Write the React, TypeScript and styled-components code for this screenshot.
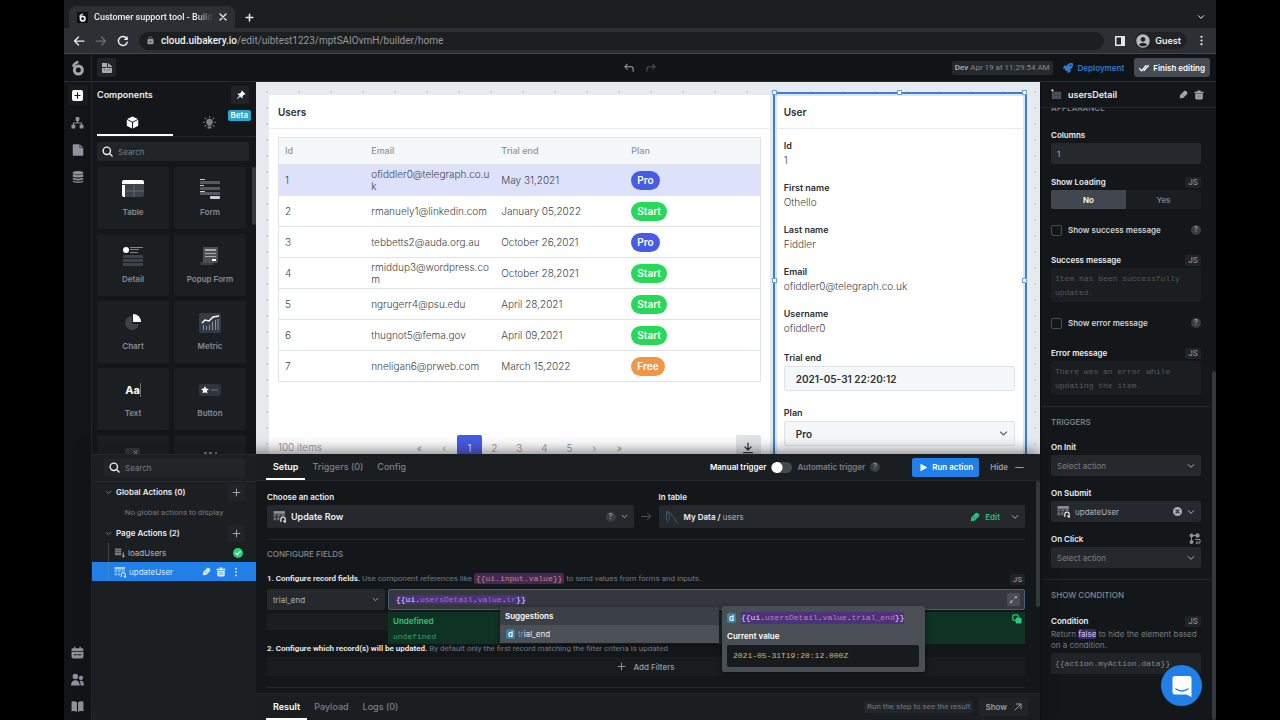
import React from 'react';
import styled, { createGlobalStyle, css } from 'styled-components';
import { MdLock, MdPushPin, MdAccountCircle } from 'react-icons/md';
import { FaRocket } from 'react-icons/fa';

const color = {
  chrome: '#1b1f20',
  chromeBar: '#2c3034',
  rail: '#111517',
  panel: '#13171a',
  raised: '#1b1f22',
  field: '#25292d',
  line: '#24282b',
  text: '#eceef0',
  soft: '#aeb3b8',
  dim: '#74797f',
  faint: '#54595e',
  blue: '#2180e8',
};

const mono = "'Liberation Mono', monospace";
const compact = "Roboto, 'Liberation Sans', sans-serif";

const GlobalStyle = createGlobalStyle`
  * { box-sizing: border-box; }
  body { margin: 0; background: #000; font-family: Inter, 'Liberation Sans', sans-serif; font-size: 9px; line-height: 12px; color: ${color.text}; }
  button, input, select, textarea { font: inherit; color: inherit; margin: 0; padding: 0; border: 0; background: none; outline: 0; }
  a { color: inherit; text-decoration: none; }
  svg { display: block; flex: none; }
`;

/* ---------- icons ---------- */

const Svg = ({ size = 12, children }: { size?: number; children: React.ReactNode }) => (
  <svg width={size} height={size} viewBox="0 0 24 24" fill="none" stroke="currentColor" strokeWidth="2" strokeLinecap="round" strokeLinejoin="round" aria-hidden="true">{children}</svg>
);
const ChevronDown = ({ size = 9 }) => <Svg size={size}><path d="M4 8l8 8 8-8" strokeWidth="3" /></Svg>;
const Plus = ({ size = 10, weight = 2.5 }) => <Svg size={size}><path d="M12 3v18M3 12h18" strokeWidth={weight} /></Svg>;
const SearchIcon = () => <Svg size={11}><circle cx="10.500" cy="10.500" r="8" strokeWidth="3" /><path d="M17 17l5 5" strokeWidth="3" /></Svg>;
const LogoIcon = ({ size = 16 }) => (
  <Svg size={size}><circle cx="12.500" cy="15" r="6" strokeWidth="4.500" /><path d="M4.500 10c1-3.500 3.500-5.500 8-7.500" strokeWidth="3.500" strokeLinecap="butt" /></Svg>
);
const Pencil = ({ size = 10 }) => (
  <Svg size={size}><path d="M2 22l1-9L13 3c2-2 5-1.500 6.500 0l1.500 1.500c1.500 1.500 2 4.500 0 6.500L11 21 2 22z" fill="currentColor" stroke="none" /><path d="M8 16l3-3" stroke="#0005" strokeWidth="2" /></Svg>
);
const Trash = ({ size = 11 }) => (
  <Svg size={size}><path d="M8 1h8v3h7v4H1V4h7V1zM3 9h18v10a4 4 0 01-4 4H7a4 4 0 01-4-4V9z" fill="currentColor" stroke="none" /><path d="M9.500 13v5M14.500 13v5" stroke="#0006" strokeWidth="2" /></Svg>
);
const Dots = ({ size = 12 }) => (
  <Svg size={size}><g fill="currentColor" stroke="none"><circle cx="12" cy="4" r="2.300" /><circle cx="12" cy="12" r="2.300" /><circle cx="12" cy="20" r="2.300" /></g></Svg>
);
const TableAction = ({ size = 12 }) => (
  <Svg size={size}>
    <g stroke="none" fill="currentColor"><path d="M1 2h21v5H1z" opacity=".75" /><path d="M1 8h5v4H1zM7.500 8h6v4h-6zM15 8h7v3h-7zM1 13.500h5V19H1zM7.500 13.500H12V19H7.500z" opacity=".5" /></g>
    <path d="M14.500 21v-4a4 4 0 018 0v5M19.500 20l3 3" stroke="#fff" strokeWidth="2" />
  </Svg>
);
const LoadAction = () => (
  <Svg size={11}><path d="M2 3h14v4H2zM2 8h14v4H2zM2 13h14v5H2z" fill="currentColor" stroke="none" opacity=".6" /><path d="M20.500 13v8M18.500 19.500l2 3 2-3" strokeWidth="2" /></Svg>
);
const Undo = () => <Svg size={10}><path d="M8 3L2 9l6 6M2 9h15a5 5 0 015 5v6" strokeWidth="2.500" /></Svg>;
const Redo = () => <Svg size={10}><path d="M16 3l6 6-6 6M22 9H7a5 5 0 00-5 5v6" strokeWidth="2.500" /></Svg>;
const Tree = () => (
  <Svg size={13}><g fill="currentColor" stroke="none"><rect x="8.500" y="2" width="7" height="7" rx="1" /><rect x="1" y="16" width="7" height="7" rx="1" /><rect x="16" y="16" width="7" height="7" rx="1" /></g><path d="M12 8v5M4.500 17v-4h15v4" /></Svg>
);
const PageIcon = () => <Svg size={14}><path d="M5 2h10l6 6v12a2 2 0 01-2 2H5a2 2 0 01-2-2V4a2 2 0 012-2z" fill="currentColor" stroke="none" /><path d="M15 2v6h6" stroke="#111517" strokeWidth="1" /></Svg>;
const DbIcon = () => (
  <Svg size={14}><g fill="currentColor" stroke="none"><ellipse cx="12" cy="4.500" rx="9" ry="3" /><path d="M3 7c3 2.400 15 2.400 18 0v4c-3 2.400-15 2.400-18 0zM3 13c3 2.400 15 2.400 18 0v3c-3 2.400-15 2.400-18 0zM3 18c3 2.400 15 2.400 18 0v1.500c-2 3.300-16 3.300-18 0z" /></g></Svg>
);
const CalendarIcon = () => (
  <Svg size={13}><path d="M1 9V6a2 2 0 012-2h18a2 2 0 012 2v3zM1 10.500h22V20a3 3 0 01-3 3H4a3 3 0 01-3-3z" fill="currentColor" stroke="none" /><path d="M7 2v4M17 2v4" strokeWidth="2.500" /><path d="M6 16h4M13 16h5" stroke="#111517" /></Svg>
);
const People = () => (
  <Svg size={13}><g fill="currentColor" stroke="none"><circle cx="8" cy="6.500" r="5" /><path d="M0 23c0-13 16-13 16 0z" /><circle cx="18.500" cy="9" r="4" /><path d="M17.500 23H24c0-8-4-10-8-8 1.500 2 1.800 5 1.500 8z" /></g></Svg>
);
const Book = () => <Svg size={13}><path d="M1 3c4-1.500 7-1 10 1v18c-3-2-6-2.500-10-1zM23 3c-4-1.500-7-1-10 1v18c3-2 6-2.500 10-1z" fill="currentColor" stroke="none" /></Svg>;
const Cube = () => (
  <Svg size={13}><path d="M12 1l10 4.500-10 5L2 5.500zM1.500 7l9.500 5v11l-9.500-5zM22.500 7L13 12v11l9.500-5z" fill="currentColor" stroke="none" /></Svg>
);
const Bulb = () => (
  <Svg size={13}><path d="M12 5a6 6 0 013.500 11v2h-7v-2A6 6 0 0112 5zM8.500 19.500h7V23h-7z" fill="currentColor" stroke="none" /><path d="M12 1v1.500M4 4l1.500 1.500M20 4l-1.500 1.500M1 11.500h2M23 11.500h-2M3.500 19L5 17.500M20.500 19L19 17.500" /></Svg>
);
const SaveDoc = () => (
  <Svg size={12}><path d="M2 2h12l8 7v11a2 2 0 01-2 2H4a2 2 0 01-2-2z" fill="currentColor" stroke="none" /><path d="M3 11h7M13 3v8h8M7 16h.01M12 16h.01M17 16h.01" stroke="#22272a" strokeWidth="2" /></Svg>
);
const ArrowRight = () => <Svg size={11}><path d="M2 12h19M14 5l7 7-7 7" /></Svg>;
const BackArrow = () => <Svg size={12}><path d="M22 12H3M11 4l-8 8 8 8" strokeWidth="2.500" /></Svg>;
const ForwardArrow = () => <Svg size={12}><path d="M2 12h19M13 4l8 8-8 8" strokeWidth="2.500" /></Svg>;
const Reload = () => <Svg size={12}><path d="M20.500 14.500A9 9 0 1119 6.500" strokeWidth="2.800" /><path d="M21.500 2v8h-8z" fill="currentColor" stroke="none" /></Svg>;
const Close = () => <Svg size={8}><path d="M3 3l18 18M21 3L3 21" strokeWidth="4" /></Svg>;
const SidePanel = () => <Svg size={12}><path d="M2 2h20v20H2z" fill="#e4e6e8" stroke="none" /><path d="M5 5h9v14H5z" fill="#26292c" stroke="none" /></Svg>;
const DoubleCheck = () => <Svg size={10}><path d="M1 13l5 6L17 6M12 18l11-12" strokeWidth="3" /></Svg>;
const Dolphin = () => (
  <Svg size={14}><path d="M4 20C2 14 2 7 3 3c4 0 7 2 9 6 3 3 5 6 6 10l4 3M3 3c4 3 6 8 4 14" stroke="#3f6e8e" strokeWidth="1.300" /></Svg>
);
const Download = () => <Svg size={12}><path d="M12 2v13M6 10l6 6 6-6M3 21h18" strokeWidth="2.500" /></Svg>;
const CopyIcon = () => <Svg size={10}><rect x="2" y="2" width="13" height="13" rx="3" strokeWidth="3" /><rect x="9" y="9" width="14" height="14" rx="3" fill="currentColor" stroke="none" /></Svg>;
const Expand = () => <Svg size={9}><path d="M14 3h7v7zM10 21H3v-7z" fill="currentColor" stroke="none" /><path d="M19 5l-5 5M5 19l5-5" strokeWidth="2.500" /></Svg>;
const PlayIcon = () => <Svg size={9}><path d="M4 2l18 10L4 22z" fill="currentColor" stroke="none" /></Svg>;
const OpenIcon = () => <Svg size={8}><path d="M3 21L21 3M7 3h14v14" strokeWidth="3" /></Svg>;
const CheckDot = () => <Svg size={10}><circle cx="12" cy="12" r="12" fill="#2ccf74" stroke="none" /><path d="M7 12.500l3.500 3.500L17 9" stroke="#fff" strokeWidth="3" /></Svg>;
const ClearIcon = () => <Svg size={9}><circle cx="12" cy="12" r="12" fill="#a9aeb3" stroke="none" /><path d="M8 8l8 8M16 8l-8 8" stroke="#25292d" strokeWidth="3" /></Svg>;
const NodesIcon = () => (
  <Svg size={12}><g fill="currentColor" stroke="none"><circle cx="5" cy="5" r="4" /><circle cx="5" cy="18" r="4" /><rect x="13" y="1" width="8" height="8" rx="2" /></g><path d="M5 5h10M5 5v13M13 13h9v7h-7M17 17l-3 3 2 2" /></Svg>
);
const DetailSmall = () => <Svg size={11}><path d="M5 6h17v16H2V8z" fill="#555a60" stroke="none" /><circle cx="3" cy="3" r="2.500" fill="#d8dade" stroke="none" /><path d="M5 10h14M5 14h14M5 18h14" stroke="#30353a" strokeWidth="1.500" /></Svg>;
const ChatFace = () => (
  <Svg size={24}><path d="M5 2h14a2.500 2.500 0 012.500 2.500V23l-5-2.500H5A2.500 2.500 0 012.500 18V4.500A2.500 2.500 0 015 2z" fill="#fff" stroke="none" /><path d="M6 15c3.500 2.600 8.500 2.600 12 0" stroke={color.blue} strokeWidth="1.500" /></Svg>
);
const Minus = () => <Svg size={9}><path d="M2 12h20" strokeWidth="3" /></Svg>;

const tileArt: Record<string, React.ReactNode> = {
  Table: (
    <svg width="24" height="20" viewBox="0 0 24 20"><rect x="1" y="1" width="22" height="17" rx="2" fill="#3d434a" /><path d="M1 5V3q0-2 2-2h18q2 0 2 2v2zM1 6h3v12H3q-2 0-2-2z" fill="#fff" /><path d="M13 6v12M5 12h18" stroke="#666c73" /></svg>
  ),
  Form: (
    <svg width="22" height="20" viewBox="0 0 22 20"><g fill="#555a62"><rect x="1" y="2" width="20" height="3" /><rect x="1" y="8" width="20" height="3" /><rect x="1" y="13" width="20" height="3" /></g><g fill="#c9ccd0"><rect x="1" y="0" width="5" height="1" /><rect x="1" y="6" width="4" height="1" /><rect x="1" y="12" width="5" height="1" /><rect x="11" y="17" width="10" height="3" rx="1" /></g></svg>
  ),
  Detail: (
    <svg width="22" height="20" viewBox="0 0 22 20"><circle cx="4" cy="4" r="3" fill="#fff" /><g fill="#80858c"><rect x="8" y="1" width="13" height="1" /><rect x="8" y="3" width="9" height="1" /><rect x="8" y="6" width="8" height="1" /></g><g fill="#3d434b"><rect x="1" y="9" width="20" height="3" /><rect x="1" y="13" width="20" height="3" /><rect x="1" y="17" width="20" height="3" /></g></svg>
  ),
  'Popup Form': (
    <svg width="22" height="20" viewBox="0 0 22 20"><path d="M1 16h14v3H2z" fill="#3a3f45" /><rect x="4" y="1" width="15" height="16" rx="1" fill="#4b5057" /><g fill="#a7abb0"><rect x="6" y="3" width="11" height="2" /><rect x="6" y="7" width="11" height="1" /><rect x="6" y="10" width="11" height="1" /></g><rect x="13" y="13" width="4" height="2" fill="#fff" /></svg>
  ),
  Chart: (
    <svg width="20" height="20" viewBox="0 0 20 20"><path d="M9 3a7 7 0 107 8H9z" fill="#3d4248" /><path d="M10 1a8 8 0 018 8h-8z" fill="#fff" /></svg>
  ),
  Metric: (
    <svg width="22" height="20" viewBox="0 0 22 20"><rect width="22" height="20" rx="2" fill="#343b44" /><path d="M4.500 12v5M7.500 13v4M10.500 12v5M13.500 9v8M16.500 7v10M19 6v11" stroke="#8b939d" /><path d="M3 10l3-3 4 1 4-4 6-1" stroke="#fff" fill="none" strokeWidth="1.500" /></svg>
  ),
  Button: (
    <svg width="22" height="20" viewBox="0 0 22 20"><rect y="4" width="22" height="12" rx="2" fill="#2f353d" /><path d="M6 6l1.200 2.600 2.800.3-2.100 1.900.6 2.800L6 12.200l-2.500 1.400.6-2.800L2 8.900l2.800-.3z" fill="#fff" /><path d="M12 10h7" stroke="#70757b" /></svg>
  ),
  Input: (
    <svg width="22" height="20" viewBox="0 0 22 20"><rect x="3" y="1" width="15" height="12" rx="2" fill="#343a41" /><path d="M12 4l3 3M15 4l-3 3" stroke="#b9bdc1" /></svg>
  ),
  Select: (
    <svg width="22" height="20" viewBox="0 0 22 20"><path d="M5 6h3M10 6h3M16 6h2" stroke="#85898d" strokeWidth="2" /></svg>
  ),
};

/* ---------- browser chrome ---------- */

const Page = styled.div`
  height: 100vh;
  min-height: 600px;
  margin: 0 5%;
  display: flex;
  flex-direction: column;
  background: ${color.panel};
  overflow: hidden;
`;
const TabStrip = styled.div`
  flex: none;
  height: 28px;
  padding: 6px 11px 0 5px;
  display: flex;
  align-items: center;
  gap: 10px;
  background: ${color.chrome};
`;
const BrowserTab = styled.div`
  align-self: stretch;
  width: 166px;
  padding: 0 8px;
  display: flex;
  align-items: center;
  gap: 6px;
  border-radius: 7px 7px 0 0;
  background: ${color.chromeBar};
`;
const Favicon = styled.span`
  padding: 1px;
  background: #0d1013;
`;
const TabTitle = styled.span`
  flex: 1;
  white-space: nowrap;
  overflow: hidden;
  font-family: ${compact};
  font-weight: 500;
  mask-image: linear-gradient(90deg, #000 86%, transparent);
`;
const IconButton = styled.button<{ $tone?: string }>`
  display: flex;
  align-items: center;
  justify-content: center;
  color: ${p => p.$tone ?? color.text};
`;
const Spacer = styled.span`
  flex: 1;
`;
const AddressBar = styled.div`
  flex: none;
  height: 26px;
  padding: 0 9px;
  display: flex;
  align-items: center;
  gap: 10px;
  background: ${color.chromeBar};
  border-bottom: 1px solid #42474a;
`;
const UrlBox = styled.div`
  flex: 1;
  height: 18px;
  padding: 0 7px;
  display: flex;
  align-items: center;
  gap: 6px;
  border-radius: 9px;
  background: ${color.chrome};
  color: #96999c;
  font-family: ${compact};
  font-size: 10px;
`;
const UrlText = styled.span`
  b { color: #f1f2f3; font-weight: 500; }
`;
const GuestChip = styled.button`
  height: 17px;
  padding: 0 6px 0 0;
  display: flex;
  align-items: center;
  gap: 4px;
  border-radius: 9px;
  background: #222225;
  font-weight: 600;
  svg { color: #b7babd; }
`;

/* ---------- app bar ---------- */

const AppBar = styled.header`
  flex: none;
  height: 28px;
  padding-right: 6px;
  display: flex;
  align-items: center;
  border-bottom: 1px solid #2a2e31;
  background: #101417;
`;
const LogoCell = styled.a`
  width: 28px;
  margin-right: 5px;
  align-self: stretch;
  display: flex;
  align-items: center;
  justify-content: center;
  color: #a1a7b1;
  border-right: 1px solid ${color.line};
`;
const SquareButton = styled.button<{ $size?: number }>`
  width: ${p => p.$size ?? 18}px;
  height: ${p => p.$size ?? 18}px;
  display: flex;
  align-items: center;
  justify-content: center;
  border-radius: 2px;
  background: #202428;
  color: #a8adb3;
`;
const PinButton = styled(SquareButton)`
  color: #fff;
  svg { transform: rotate(45deg); }
`;
const BarGroup = styled.div<{ $grow?: boolean; $gap: number }>`
  display: flex;
  align-items: center;
  gap: ${p => p.$gap}px;
  ${p => p.$grow && css`flex: 1; justify-content: center; padding-left: 212px;`}
`;
const VersionPill = styled.span`
  padding: 1px 3px;
  border-radius: 2px;
  background: #25292c;
  color: #85898e;
  font-family: ${compact};
  font-size: 8px;
  b { font-weight: 500; color: #b3b7bb; }
`;
const DeployLink = styled.a`
  height: 18px;
  padding: 0 5px;
  display: flex;
  align-items: center;
  gap: 5px;
  color: #2e7bd0;
  font-size: 8px;
  font-weight: 600;
`;
const FinishButton = styled.button`
  height: 19px;
  padding: 0 5px;
  display: flex;
  align-items: center;
  gap: 4px;
  border-radius: 3px;
  background: #454b52;
  color: #fff;
  font-size: 8px;
  font-weight: 600;
`;

/* ---------- body frame ---------- */

const Body = styled.div`
  flex: 1;
  min-height: 0;
  display: flex;
`;
const Rail = styled.nav`
  width: 28px;
  flex: none;
  padding: 3px 0 4px;
  display: flex;
  flex-direction: column;
  align-items: center;
  gap: 8px;
  background: ${color.rail};
  border-right: 1px solid ${color.line};
`;
const RailButton = styled.button<{ $active?: boolean }>`
  width: 20px;
  height: ${p => (p.$active ? 20 : 19)}px;
  display: flex;
  align-items: center;
  justify-content: center;
  color: ${p => (p.$active ? '#fff' : '#8e939d')};
  background: ${p => (p.$active ? '#181c1f' : 'none')};
`;
const AddSquare = styled.span`
  width: 11px;
  height: 11px;
  display: flex;
  align-items: center;
  justify-content: center;
  border-radius: 2px;
  background: #fff;
  color: #16191c;
`;
const Middle = styled.div`
  flex: 1;
  min-width: 0;
  display: flex;
  flex-direction: column;
`;
const Upper = styled.div`
  flex: 1;
  min-height: 0;
  display: flex;
`;

/* ---------- components panel ---------- */

const Library = styled.aside`
  width: 164px;
  flex: none;
  display: flex;
  flex-direction: column;
  overflow: hidden;
`;
const LibraryHead = styled.div`
  height: 26px;
  flex: none;
  padding: 0 7px 0 5px;
  display: flex;
  align-items: center;
  justify-content: space-between;
  font-weight: 600;
`;
const LibraryTabs = styled.div`
  height: 29px;
  flex: none;
  margin-left: 5px;
  display: flex;
  border-bottom: 1px solid ${color.line};
  position: relative;
`;
const LibraryTab = styled.button<{ $active?: boolean }>`
  width: ${p => (p.$active ? 76 : 73)}px;
  display: flex;
  align-items: center;
  justify-content: center;
  padding: 3px ${p => (p.$active ? 5 : 0)}px 0 0;
  color: ${p => (p.$active ? '#fff' : '#7d8187')};
  border-bottom: 2px solid ${p => (p.$active ? '#fff' : 'transparent')};
`;
const Beta = styled.span`
  position: absolute;
  top: 2px;
  right: 5px;
  padding: 0 3px;
  border-radius: 2px;
  background: #2da5c8;
  color: #e9fbff;
  font-size: 8px;
  line-height: 11px;
  font-weight: 600;
`;
const SearchField = styled.label<{ $inset?: boolean }>`
  height: 19px;
  flex: none;
  margin: ${p => (p.$inset ? '3px 11px 4px 12px' : '5px 7px 6px 5px')};
  padding: 0 5px;
  display: flex;
  align-items: center;
  gap: 5px;
  border-radius: 2px;
  background: #212528;
  input { flex: 1; min-width: 0; font-size: 8px; }
  input::placeholder { color: #777c81; }
`;
const TileArea = styled.div`
  flex: 1;
  min-height: 0;
  overflow: hidden;
  display: flex;
  justify-content: space-between;
  padding-left: 5px;
`;
const TileGrid = styled.div`
  display: grid;
  grid-template-columns: 72px 72px;
  grid-auto-rows: 62px;
  gap: 5px;
`;
const Tile = styled.button`
  display: flex;
  flex-direction: column;
  align-items: center;
  padding-top: 12px;
  gap: 7px;
  border-radius: 2px;
  background: ${color.raised};
  color: #868b90;
  font-size: 8px;
  font-weight: 600;
`;
const TextArt = styled.span`
  margin: 3px 0;
  height: 14px;
  line-height: 14px;
  font-size: 11px;
  font-weight: 700;
  color: #fff;
  border-right: 1px solid #666b70;
`;
const ScrollThumb = styled.span<{ $height: string }>`
  width: 4px;
  height: ${p => p.$height};
  border-radius: 2px;
  background: #33383c;
`;

/* ---------- canvas ---------- */

const Canvas = styled.main`
  flex: 1;
  min-width: 0;
  overflow: hidden;
  padding: 13px 13px 0 13px;
  display: grid;
  grid-template-columns: 65fr 33fr;
  gap: 3px;
  background: radial-gradient(circle, #cdd2d8 1px, transparent 1px) -5px 2px / 32px 16px, #e7ebf0;
  color: #2c3035;
`;
const Card = styled.section`
  background: #fff;
`;
const CardTitle = styled.h2<{ $pad: number }>`
  margin: 0;
  height: 34px;
  padding: 0 ${p => p.$pad}px;
  font-size: 10px;
  line-height: 34px;
  font-weight: 600;
  border-bottom: 1px solid #e8ecf0;
`;
const TableBody = styled.div`
  padding: 8px 9px 0;
`;
const TableSpace = styled.div`
  min-height: 298px;
`;
const DataTable = styled.table`
  width: 100%;
  table-layout: fixed;
  border-collapse: collapse;
  border: 1px solid #e0e4e8;
  font-size: 10px;
  line-height: 12px;
  font-weight: 300;
  th, td { padding: 0 2px 0 6px; text-align: left; word-break: break-all; }
  th { height: 27px; font-size: 9px; font-weight: 500; color: #8d929c; background: #f5f8fb; }
  td { height: 31px; border-top: 1px solid #e0e4e8; color: #41454a; }
`;
const Row = styled.tr<{ $selected?: boolean }>`
  background: ${p => (p.$selected ? '#dde2fa' : '#fff')};
`;
const PlanTag = styled.span<{ $plan: string }>`
  display: inline-block;
  padding: 0 6px;
  border-radius: 10px;
  line-height: 19px;
  font-weight: 600;
  color: #fff;
  background: ${p => ({ Pro: '#475ce6', Start: '#26d959', Free: '#f29546' } as Record<string, string>)[p.$plan]};
`;
const TableFoot = styled.div`
  display: grid;
  grid-template-columns: 1fr auto 1fr;
  color: #8b8fa0;
  font-weight: 300;
  font-size: 10px;
  line-height: 24px;
`;
const PageButton = styled.button<{ $active?: boolean }>`
  width: 25px;
  height: 25px;
  border-radius: 2px;
  ${p => p.$active && css`background: #475ce6; color: #fff;`}
`;
const ExportButton = styled.button`
  justify-self: end;
  width: 25px;
  height: 25px;
  display: flex;
  align-items: center;
  justify-content: center;
  border-radius: 2px;
  background: #e3e5e8;
  color: #2c3035;
`;
const Selected = styled(Card)`
  position: relative;
  margin-top: -3px;
  padding: 1px 10px 0 9px;
  border: 2px solid #3c80cc;
  border-bottom: 0;
  box-shadow: inset 0 0 0 2px #d9e7f8;
`;
const Handle = styled.span<{ $x: string; $y: string }>`
  position: absolute;
  left: ${p => p.$x};
  top: ${p => p.$y};
  width: 5px;
  height: 5px;
  margin: -4px 0 0 -3px;
  background: #fff;
  border: 1px solid #6c9fd8;
`;
const UserTitle = styled(CardTitle)`
  margin: 0 -7px 9px -7px;
`;
const Detail = styled.dl`
  margin: 0 0 16px;
  dt { font-size: 9px; line-height: 15px; font-weight: 600; }
  dd { margin: 0 0 13px; font-size: 10px; line-height: 14px; font-weight: 300; color: #41454a; }
`;
const UserField = styled.label`
  display: block;
  margin-bottom: 15px;
  font-size: 9px;
  line-height: 14px;
  font-weight: 600;
`;
const UserControl = styled.span`
  height: 25px;
  margin-top: 1px;
  padding: 0 6px 0 11px;
  display: flex;
  align-items: center;
  border: 1px solid #dfe4ea;
  border-radius: 2px;
  background: #f5f8fb;
  font-size: 10px;
  font-weight: 600;
  input, select { flex: 1; min-width: 0; appearance: none; }
  svg { color: #5f656c; }
`;

/* ---------- dock ---------- */

const Dock = styled.section`
  position: relative;
  flex: none;
  height: 266px;
  display: flex;
  box-shadow: 0 -2px 14px rgba(20, 20, 20, 0.6);
`;
const ActionList = styled.aside`
  width: 164px;
  flex: none;
  display: flex;
  flex-direction: column;
  background: ${color.raised};
  border-top: 1px solid #26292c;
`;
const ListGroups = styled.div`
  border-top: 1px solid ${color.line};
`;
const GroupHead = styled.div`
  height: 20px;
  padding: 0 11px 0 13px;
  display: flex;
  align-items: center;
  justify-content: space-between;
  font-size: 8px;
  font-weight: 600;
`;
const GroupToggle = styled.button`
  display: flex;
  align-items: center;
  gap: 4px;
  svg { color: #7c8187; }
`;
const EmptyNote = styled.p`
  margin: 0;
  height: 21px;
  line-height: 21px;
  text-align: center;
  color: ${color.dim};
  font-family: ${compact};
  font-size: 8px;
`;
const ActionRow = styled.div<{ $active?: boolean }>`
  height: 19px;
  padding: 0 ${p => (p.$active ? 15 : 13)}px 0 22px;
  display: flex;
  align-items: center;
  gap: 5px;
  font-size: 8px;
  color: ${p => (p.$active ? '#d8e9ff' : '#b7bbc0')};
  background: linear-gradient(#7f888f55, #7f888f55) 16px 0 / 1px 100% no-repeat ${p => (p.$active ? color.blue : 'transparent')};
  > button:first-child { flex: 1; display: flex; align-items: center; gap: 3px; }
`;
const Editor = styled.div`
  flex: 1;
  min-width: 0;
  display: flex;
  flex-direction: column;
  background: ${color.panel};
`;
const EditorBar = styled.div<{ $foot?: boolean }>`
  height: 27px;
  flex: none;
  display: flex;
  align-items: stretch;
  padding: 0 ${p => (p.$foot ? 12 : 16)}px 0 10px;
  background: #1a1e20;
  ${p => (p.$foot ? css`border-top: 1px solid ${color.line};` : css`border-bottom: 1px solid ${color.line};`)}
`;
const EditorTab = styled.button<{ $active?: boolean }>`
  padding: 0 7px;
  font-size: 9px;
  font-weight: ${p => (p.$active ? 600 : 500)};
  color: ${p => (p.$active ? '#fff' : '#7b8086')};
  border-top: 2px solid transparent;
  border-bottom: 2px solid ${p => (p.$active ? '#fff' : 'transparent')};
`;
const TriggerLabel = styled.span<{ $on?: boolean }>`
  font-size: 8px;
  font-weight: 600;
  color: ${p => (p.$on ? '#fff' : '#7b8086')};
`;
const Switch = styled.input`
  appearance: none;
  width: 21px;
  height: 11px;
  border-radius: 6px;
  background: radial-gradient(circle at 6px 50%, #fff 5px, #44494e 6px);
`;
const Help = styled.button`
  width: 10px;
  height: 10px;
  border-radius: 5px;
  background: #3a3e43;
  color: #989da2;
  font-size: 7px;
  line-height: 10px;
  font-weight: 600;
`;
const RunSlot = styled.div`
  margin-left: 32px;
  display: flex;
  align-items: center;
  gap: 11px;
`;
const RunButton = styled.button`
  height: 19px;
  padding: 0 6px 0 7px;
  display: flex;
  align-items: center;
  gap: 4px;
  border-radius: 2px;
  background: ${color.blue};
  color: #fff;
  font-size: 8px;
  font-weight: 600;
`;
const FlatButton = styled.button<{ $boxed?: boolean }>`
  display: flex;
  align-items: center;
  gap: 7px;
  color: #9a9fa4;
  font-size: 8px;
  font-weight: 600;
  ${p => p.$boxed && css`background: #202427; padding: 0 6px; height: 18px;`}
`;
const EditorScroll = styled.div`
  flex: 1;
  min-height: 0;
  display: flex;
  justify-content: space-between;
`;
const Form = styled.div`
  flex: 1;
  min-width: 0;
  padding: 10px 11px 0 11px;
`;
const Choice = styled.div`
  display: grid;
  grid-template-columns: 1fr 25px 1fr;
  align-items: end;
  padding-bottom: 11px;
  border-bottom: 1px solid ${color.line};
`;
const FieldLabel = styled.label`
  display: block;
  font-size: 8px;
  font-weight: 600;
`;
const Control = styled.div<{ $h?: number }>`
  height: ${p => p.$h ?? 21}px;
  padding: 0 6px;
  display: flex;
  align-items: center;
  gap: 5px;
  border-radius: 2px;
  background: ${color.field};
  color: ${color.soft};
  font-size: 8px;
  select, input { flex: 1; min-width: 0; appearance: none; }
  select option { color: #000; }
`;
const ActionSelect = styled.select<{ $empty: boolean }>`
  color: ${p => (p.$empty ? '#7b8085' : color.soft)};
`;
const MainControl = styled(Control)`
  margin-top: 2px;
  select { font-size: 9px; font-weight: 600; color: #eceef0; }
`;
const SourceButton = styled.button`
  flex: 1;
  text-align: left;
  font-size: 8px;
  b { font-weight: 600; color: #eceef0; }
`;
const ArrowCell = styled.span`
  height: 23px;
  display: flex;
  align-items: center;
  justify-content: center;
  color: ${color.faint};
`;
const EditButton = styled.button`
  display: flex;
  align-items: center;
  gap: 5px;
  margin-right: 6px;
  color: #2bbf7b;
  font-weight: 600;
`;
const SectionTitle = styled.h3`
  margin: 0;
  font-size: 8px;
  line-height: 12px;
  font-weight: 500;
  color: #858a90;
`;
const TitleSlot = styled.div`
  padding-top: 8px;
`;
const Step = styled.div`
  height: 12px;
  margin-top: 13px;
  display: flex;
  align-items: center;
  justify-content: space-between;
  color: ${color.dim};
  font-family: ${compact};
  font-size: 8px;
  b { color: #f0f1f2; font-weight: 600; }
`;
const Js = styled.button`
  height: 11px;
  padding: 0 3px;
  border-radius: 2px;
  background: #202427;
  color: #8b9095;
  font-size: 8px;
  line-height: 11px;
  font-weight: 500;
`;
const Code = styled.code`
  padding: 1px 2px;
  border-radius: 2px;
  background: #43285c;
  color: #d08a63;
  font-family: ${mono};
  font-size: 8px;
`;
const Expression = styled.code`
  background: #4b327c;
  color: #9b76bb;
  font-family: ${mono};
  font-size: 8px;
  line-height: 12px;
  i { font-style: normal; color: #e2dcf0; }
  em { font-style: normal; color: #c77dae; }
`;
const FieldRow = styled.div`
  position: relative;
  margin-top: 4px;
  display: grid;
  grid-template-columns: 118px 1fr;
  gap: 3px;
`;
const ExpressionBox = styled.div`
  height: 21px;
  padding: 0 4px 0 7px;
  display: flex;
  align-items: center;
  justify-content: space-between;
  border: 1px solid #43627f;
  border-radius: 2px;
  background: #34383e;
  > div { outline: 0; flex: 1; }
`;
const ExpandButton = styled(SquareButton)`
  background: #4a4e54;
`;
const NextRow = styled.div`
  margin-top: 3px;
  height: 17px;
  background: #1a1e21;
`;
const Preview = styled.div`
  position: absolute;
  z-index: 1;
  top: 23px;
  left: 121px;
  right: 0;
  height: 32px;
  padding: 2px 3px 0 5px;
  display: flex;
  justify-content: space-between;
  background: #0f3323;
  color: #2fc67e;
  font-size: 8px;
  b { display: block; line-height: 14px; font-weight: 600; }
  code { display: block; font-family: ${mono}; line-height: 18px; color: #2fa46d; }
`;
const Suggestions = styled.div`
  position: absolute;
  z-index: 2;
  top: 18px;
  left: 233px;
  width: 219px;
  background: #3b3f46;
  font-size: 8px;
  line-height: 18px;
  box-shadow: 0 1px 4px #0008;
  h4 { margin: 0; padding: 0 5px; font-size: 8px; font-weight: 600; color: #fff; }
`;
const SuggestionItem = styled.button`
  width: 100%;
  height: 18px;
  padding: 0 6px;
  display: flex;
  align-items: center;
  gap: 3px;
  background: #4c5057;
  mark { background: none; color: #5aa2e6; }
`;
const TypeBadge = styled.span`
  width: 9px;
  height: 10px;
  border-radius: 2px;
  background: #3a829f;
  color: #fff;
  text-align: center;
  font-size: 8px;
  line-height: 10px;
  font-weight: 600;
`;
const ValueTip = styled.div`
  position: absolute;
  z-index: 3;
  top: 17px;
  left: 455px;
  width: 203px;
  padding: 6px 6px 5px 5px;
  border-radius: 2px;
  background: #4a4e55;
  box-shadow: 0 1px 5px #0008;
  font-size: 8px;
  h4 { margin: 6px 0 3px; font-size: 8px; line-height: 12px; font-weight: 600; color: #fff; }
`;
const TipHead = styled.div`
  display: flex;
  align-items: center;
  gap: 5px;
`;
const ValueOut = styled.output`
  display: block;
  height: 22px;
  padding-left: 6px;
  border-radius: 2px;
  background: #181b1d;
  color: #d5b968;
  font-family: ${mono};
  font-size: 8px;
  line-height: 22px;
`;
const AddFilters = styled.button`
  width: 100%;
  height: 19px;
  margin-top: 2px;
  display: flex;
  align-items: center;
  justify-content: center;
  gap: 7px;
  background: #181c1f;
  color: #999da2;
  font-size: 8px;
  font-weight: 500;
`;
const Rule = styled.hr`
  margin: 11px 0 0;
  border: 0;
  border-top: 1px solid ${color.line};
`;
const RunNote = styled.span`
  padding: 0 3px;
  border-radius: 2px;
  background: #22262a;
  color: #74797f;
  font-family: ${compact};
  font-size: 8px;
`;

/* ---------- inspector ---------- */

const Inspector = styled.aside`
  width: 176px;
  flex: none;
  display: flex;
  flex-direction: column;
  background: ${color.panel};
  border-left: 1px solid #0c0f11;
`;
const InspectorHead = styled.div`
  height: 26px;
  flex: none;
  padding: 0 12px 0 10px;
  display: flex;
  align-items: center;
  gap: 6px;
  font-weight: 600;
  border-bottom: 1px solid ${color.line};
`;
const InspectorScroll = styled.div`
  flex: 1;
  min-height: 0;
  overflow: hidden;
  display: flex;
  align-items: flex-end;
  justify-content: space-between;
`;
const InspectorBody = styled.div`
  flex: 1;
  min-width: 0;
  align-self: flex-start;
  margin-top: -6px;
`;
const Block = styled.section`
  padding: 0 11px 11px 10px;
  border-bottom: 1px solid ${color.line};
  & + & { padding-top: 9px; }
  &:last-child { border-bottom: 0; }
`;
const Field = styled.div<{ $top?: number }>`
  margin-top: ${p => p.$top ?? 11}px;
`;
const LabelRow = styled.div`
  margin-bottom: 2px;
  height: 12px;
  display: flex;
  align-items: center;
  justify-content: space-between;
  svg { color: #8b9095; }
`;
const Segments = styled.div`
  display: grid;
  grid-template-columns: 1fr 1fr;
  border-radius: 2px;
  overflow: hidden;
  background: #1a1e21;
`;
const Segment = styled.button<{ $on?: boolean }>`
  height: 19px;
  font-size: 8px;
  font-weight: 600;
  color: ${p => (p.$on ? '#fff' : '#7d8287')};
  background: ${p => (p.$on ? '#41474e' : 'none')};
`;
const CheckRow = styled.div`
  margin-top: 15px;
  height: 12px;
  display: flex;
  align-items: center;
  justify-content: space-between;
  label { display: flex; align-items: center; gap: 6px; font-size: 8px; font-weight: 600; color: #cfd2d5; }
  input { appearance: none; width: 11px; height: 11px; border: 1px solid #484d52; border-radius: 2px; }
`;
const Message = styled.textarea`
  display: block;
  width: 100%;
  height: 34px;
  padding: 4px 4px 2px;
  resize: none;
  overflow: hidden;
  border-radius: 2px;
  background: #1a1e21;
  font-family: ${mono};
  font-size: 8px;
  line-height: 14px;
  &::placeholder { color: #55595d; }
`;
const Hint = styled.p`
  margin: 0 0 2px;
  color: #767b81;
  font-size: 8px;
  line-height: 11px;
  mark { background: #3c2a68; color: #d5c8f2; border-radius: 2px; }
`;
const CodeInput = styled.input`
  width: 100%;
  height: 21px;
  padding: 0 4px;
  border-radius: 2px;
  background: #202427;
  font-family: ${mono};
  font-size: 8px;
  &::placeholder { color: #85898d; }
`;
const ChatButton = styled.button`
  position: fixed;
  right: calc(5% + 14px);
  bottom: 14px;
  width: 41px;
  height: 41px;
  display: flex;
  align-items: center;
  justify-content: center;
  border-radius: 50%;
  background: ${color.blue};
`;

const rows = [
  ['1', 'ofiddler0@telegraph.co.uk', 'May 31,2021', 'Pro'],
  ['2', 'rmanuely1@linkedin.com', 'January 05,2022', 'Start'],
  ['3', 'tebbetts2@auda.org.au', 'October 26,2021', 'Pro'],
  ['4', 'rmiddup3@wordpress.com', 'October 28,2021', 'Start'],
  ['5', 'ngrugerr4@psu.edu', 'April 28,2021', 'Start'],
  ['6', 'thugnot5@fema.gov', 'April 09,2021', 'Start'],
  ['7', 'nneligan6@prweb.com', 'March 15,2022', 'Free'],
];
const details = [
  ['Id', '1'],
  ['First name', 'Othello'],
  ['Last name', 'Fiddler'],
  ['Email', 'ofiddler0@telegraph.co.uk'],
  ['Username', 'ofiddler0'],
];
const handles = [['0%', '0%'], ['50%', '0%'], ['100%', '0%'], ['0%', '188px'], ['100%', '188px']];

function SelectAction({ id, value }: { id: string; value?: string }) {
  return (
    <Control>
      {value && <TableAction size={13} />}
      <ActionSelect id={id} $empty={!value}><option>{value ?? 'Select action'}</option></ActionSelect>
      {value && <IconButton aria-label="Clear"><ClearIcon /></IconButton>}
      <ChevronDown size={8} />
    </Control>
  );
}

function MessageField({ id, label, check, text }: { id: string; label: string; check: string; text: string }) {
  return (
    <>
      <CheckRow>
        <label><input type="checkbox" />{check}</label>
        <Help aria-label="Help">?</Help>
      </CheckRow>
      <Field $top={18}>
        <LabelRow><FieldLabel htmlFor={id}>{label}</FieldLabel><Js>JS</Js></LabelRow>
        <Message id={id} placeholder={text} />
      </Field>
    </>
  );
}

export default function App() {
  return (
    <Page>
      <GlobalStyle />
      <TabStrip>
        <BrowserTab>
          <Favicon><LogoIcon size={9} /></Favicon>
          <TabTitle>Customer support tool - Builder</TabTitle>
          <IconButton aria-label="Close tab"><Close /></IconButton>
        </BrowserTab>
        <IconButton aria-label="New tab"><Plus size={9} weight={4} /></IconButton>
        <Spacer />
        <IconButton aria-label="Tabs"><ChevronDown size={8} /></IconButton>
      </TabStrip>
      <AddressBar>
        <IconButton aria-label="Back"><BackArrow /></IconButton>
        <IconButton aria-label="Forward" $tone="#6b6f73"><ForwardArrow /></IconButton>
        <IconButton aria-label="Reload"><Reload /></IconButton>
        <UrlBox>
          <MdLock size={9} />
          <UrlText><b>cloud.uibakery.io</b>/edit/uibtest1223/mptSAIOvmH/builder/home</UrlText>
        </UrlBox>
        <BarGroup $gap={9}>
          <IconButton aria-label="Side panel"><SidePanel /></IconButton>
          <GuestChip><MdAccountCircle size={16} />Guest</GuestChip>
          <IconButton aria-label="Menu"><Dots size={11} /></IconButton>
        </BarGroup>
      </AddressBar>

      <AppBar>
        <LogoCell href="#" aria-label="Home"><LogoIcon /></LogoCell>
        <SquareButton $size={19} aria-label="Save"><SaveDoc /></SquareButton>
        <BarGroup $grow $gap={12}>
          <IconButton aria-label="Undo" $tone="#a1a6ac"><Undo /></IconButton>
          <IconButton aria-label="Redo" $tone="#50555a"><Redo /></IconButton>
        </BarGroup>
        <BarGroup $gap={5}>
          <VersionPill><b>Dev</b> Apr 19 at 11:29:54 AM</VersionPill>
          <DeployLink href="#"><FaRocket size={10} />Deployment</DeployLink>
          <FinishButton><DoubleCheck />Finish editing</FinishButton>
        </BarGroup>
      </AppBar>

      <Body>
        <Rail>
          <RailButton $active aria-label="Add"><AddSquare><Plus size={7} weight={4} /></AddSquare></RailButton>
          <RailButton aria-label="Structure"><Tree /></RailButton>
          <RailButton aria-label="Pages"><PageIcon /></RailButton>
          <RailButton aria-label="Data"><DbIcon /></RailButton>
          <Spacer />
          <RailButton aria-label="Schedule"><CalendarIcon /></RailButton>
          <RailButton aria-label="Team"><People /></RailButton>
          <RailButton aria-label="Docs"><Book /></RailButton>
        </Rail>

        <Middle>
          <Upper>
            <Library>
              <LibraryHead>Components<PinButton aria-label="Pin"><MdPushPin size={11} /></PinButton></LibraryHead>
              <LibraryTabs>
                <LibraryTab $active aria-label="Components"><Cube /></LibraryTab>
                <LibraryTab aria-label="Ideas"><Bulb /></LibraryTab>
                <Beta>Beta</Beta>
              </LibraryTabs>
              <SearchField><SearchIcon /><input placeholder="Search" aria-label="Search components" /></SearchField>
              <TileArea>
                <TileGrid>
                  {['Table', 'Form', 'Detail', 'Popup Form', 'Chart', 'Metric', 'Text', 'Button', 'Input', 'Select'].map(name => (
                    <Tile key={name}>{tileArt[name] ?? <TextArt>Aa</TextArt>}{name}</Tile>
                  ))}
                </TileGrid>
                <ScrollThumb $height="58px" />
              </TileArea>
            </Library>

            <Canvas>
              <Card>
                <CardTitle $pad={9}>Users</CardTitle>
                <TableBody>
                  <TableSpace>
                    <DataTable>
                      <colgroup><col width="18%" /><col width="27%" /><col width="27%" /><col width="28%" /></colgroup>
                      <thead><tr><th>Id</th><th>Email</th><th>Trial end</th><th>Plan</th></tr></thead>
                      <tbody>
                        {rows.map(([id, email, date, plan]) => (
                          <Row key={id} $selected={id === '1'}>
                            <td>{id}</td><td>{email}</td><td>{date}</td><td><PlanTag $plan={plan}>{plan}</PlanTag></td>
                          </Row>
                        ))}
                      </tbody>
                    </DataTable>
                  </TableSpace>
                  <TableFoot>
                    <span>100 items</span>
                    <span>
                      {['«', '‹', '1', '2', '3', '4', '5', '›', '»'].map(p => <PageButton key={p} $active={p === '1'}>{p}</PageButton>)}
                    </span>
                    <ExportButton aria-label="Download"><Download /></ExportButton>
                  </TableFoot>
                </TableBody>
              </Card>
              <Selected>
                {handles.map(([x, y]) => <Handle key={x + y} $x={x} $y={y} />)}
                <UserTitle $pad={7}>User</UserTitle>
                <Detail>
                  {details.map(([k, v]) => <React.Fragment key={k}><dt>{k}</dt><dd>{v}</dd></React.Fragment>)}
                </Detail>
                <UserField>Trial end<UserControl><input defaultValue="2021-05-31 22:20:12" /></UserControl></UserField>
                <UserField>Plan<UserControl><select><option>Pro</option></select><ChevronDown /></UserControl></UserField>
              </Selected>
            </Canvas>
          </Upper>

          <Dock>
            <ActionList>
              <SearchField $inset><SearchIcon /><input placeholder="Search" aria-label="Search actions" /></SearchField>
              <ListGroups>
                <GroupHead><GroupToggle><ChevronDown size={7} />Global Actions (0)</GroupToggle><SquareButton $size={17} aria-label="Add global action"><Plus size={9} /></SquareButton></GroupHead>
                <EmptyNote>No global actions to display</EmptyNote>
                <GroupHead><GroupToggle><ChevronDown size={7} />Page Actions (2)</GroupToggle><SquareButton $size={17} aria-label="Add page action"><Plus size={9} /></SquareButton></GroupHead>
                <ActionRow><button><LoadAction />loadUsers</button><CheckDot /></ActionRow>
                <ActionRow $active>
                  <button><TableAction />updateUser</button>
                  <IconButton aria-label="Rename" $tone="#d3e6ff"><Pencil size={9} /></IconButton>
                  <IconButton aria-label="Delete" $tone="#d3e6ff"><Trash size={10} /></IconButton>
                  <IconButton aria-label="More" $tone="#d3e6ff"><Dots size={10} /></IconButton>
                </ActionRow>
              </ListGroups>
            </ActionList>

            <Editor>
              <EditorBar>
                <EditorTab $active>Setup</EditorTab>
                <EditorTab>Triggers (0)</EditorTab>
                <EditorTab>Config</EditorTab>
                <Spacer />
                <BarGroup $gap={5}>
                  <TriggerLabel $on>Manual trigger</TriggerLabel>
                  <Switch type="checkbox" role="switch" aria-label="Automatic trigger" />
                  <TriggerLabel>Automatic trigger</TriggerLabel>
                  <Help aria-label="Help">?</Help>
                </BarGroup>
                <RunSlot>
                  <RunButton><PlayIcon />Run action</RunButton>
                  <FlatButton>Hide<Minus /></FlatButton>
                </RunSlot>
              </EditorBar>
              <EditorScroll>
                <Form>
                  <Choice>
                    <div>
                      <FieldLabel htmlFor="action">Choose an action</FieldLabel>
                      <MainControl $h={23}>
                        <TableAction size={13} />
                        <select id="action"><option>Update Row</option></select>
                        <Help aria-label="Help">?</Help>
                        <ChevronDown size={7} />
                      </MainControl>
                    </div>
                    <ArrowCell><ArrowRight /></ArrowCell>
                    <div>
                      <FieldLabel as="span" id="source-label">In table</FieldLabel>
                      <MainControl $h={23}>
                        <Dolphin />
                        <SourceButton aria-labelledby="source-label"><b>My Data /</b> users</SourceButton>
                        <EditButton><Pencil />Edit</EditButton>
                        <ChevronDown size={8} />
                      </MainControl>
                    </div>
                  </Choice>
                  <TitleSlot><SectionTitle>CONFIGURE FIELDS</SectionTitle></TitleSlot>
                  <Step>
                    <span><b>1. Configure record fields.</b> Use component references like <Code>{'{{ui.input.value}}'}</Code> to send values from forms and inputs.</span>
                    <Js>JS</Js>
                  </Step>
                  <FieldRow>
                    <Control>
                      <select aria-label="Field"><option>trial_end</option></select>
                      <ChevronDown size={7} />
                    </Control>
                    <ExpressionBox>
                      <div role="textbox" aria-label="Value" contentEditable suppressContentEditableWarning>
                        <Expression><i>{'{{ui.'}</i>usersDetail<i>.</i>value<i>.</i>tr<i>{'}}'}</i></Expression>
                      </div>
                      <ExpandButton $size={13} aria-label="Expand"><Expand /></ExpandButton>
                    </ExpressionBox>
                    <Preview>
                      <span><b>Undefined</b><code>undefined</code></span>
                      <CopyIcon />
                    </Preview>
                    <Suggestions>
                      <h4>Suggestions</h4>
                      <SuggestionItem><TypeBadge>d</TypeBadge><span><mark>tr</mark>ial_end</span></SuggestionItem>
                    </Suggestions>
                    <ValueTip>
                      <TipHead><TypeBadge>d</TypeBadge><Expression><i>{'{{ui.'}</i><em>usersDetail</em><i>.</i><em>value</em><i>.</i><em>trial_end</em><i>{'}}'}</i></Expression></TipHead>
                      <h4>Current value</h4>
                      <ValueOut>2021-05-31T19:20:12.000Z</ValueOut>
                    </ValueTip>
                  </FieldRow>
                  <NextRow />
                  <Step><span><b>2. Configure which record(s) will be updated.</b> By default only the first record matching the filter criteria is updated</span></Step>
                  <AddFilters><Plus size={9} />Add Filters</AddFilters>
                  <Rule />
                </Form>
                <ScrollThumb $height="126px" />
              </EditorScroll>
              <EditorBar $foot>
                <EditorTab $active>Result</EditorTab>
                <EditorTab>Payload</EditorTab>
                <EditorTab>Logs (0)</EditorTab>
                <Spacer />
                <BarGroup $gap={6}>
                  <RunNote>Run the step to see the result</RunNote>
                  <FlatButton $boxed>Show<OpenIcon /></FlatButton>
                </BarGroup>
              </EditorBar>
            </Editor>
          </Dock>
        </Middle>

        <Inspector>
          <InspectorHead>
            <DetailSmall />
            usersDetail
            <Spacer />
            <IconButton aria-label="Rename" $tone="#a3a8ad"><Pencil size={9} /></IconButton>
            <IconButton aria-label="Delete" $tone="#a3a8ad"><Trash size={10} /></IconButton>
          </InspectorHead>
          <InspectorScroll>
            <InspectorBody>
              <Block>
                <SectionTitle>APPEARANCE</SectionTitle>
                <Field $top={15}>
                  <LabelRow><FieldLabel htmlFor="columns">Columns</FieldLabel></LabelRow>
                  <Control><input id="columns" defaultValue="1" /></Control>
                </Field>
                <Field $top={12}>
                  <LabelRow><FieldLabel as="span">Show Loading</FieldLabel><Js>JS</Js></LabelRow>
                  <Segments><Segment $on>No</Segment><Segment>Yes</Segment></Segments>
                </Field>
                <MessageField id="success" label="Success message" check="Show success message" text="Item has been successfully updated." />
                <MessageField id="error" label="Error message" check="Show error message" text="There was an error while updating the item." />
              </Block>
              <Block>
                <SectionTitle>TRIGGERS</SectionTitle>
                <Field $top={13}><LabelRow><FieldLabel htmlFor="init">On Init</FieldLabel></LabelRow><SelectAction id="init" /></Field>
                <Field><LabelRow><FieldLabel htmlFor="submit">On Submit</FieldLabel></LabelRow><SelectAction id="submit" value="updateUser" /></Field>
                <Field><LabelRow><FieldLabel htmlFor="click">On Click</FieldLabel><NodesIcon /></LabelRow><SelectAction id="click" /></Field>
              </Block>
              <Block>
                <SectionTitle>SHOW CONDITION</SectionTitle>
                <Field $top={14}>
                  <LabelRow><FieldLabel htmlFor="condition">Condition</FieldLabel><Js>JS</Js></LabelRow>
                  <Hint>Return <mark>false</mark> to hide the element based on a condition.</Hint>
                  <CodeInput id="condition" placeholder="{{action.myAction.data}}" />
                </Field>
              </Block>
            </InspectorBody>
            <ScrollThumb $height="57%" />
          </InspectorScroll>
        </Inspector>
      </Body>
      <ChatButton aria-label="Open chat"><ChatFace /></ChatButton>
    </Page>
  );
}
